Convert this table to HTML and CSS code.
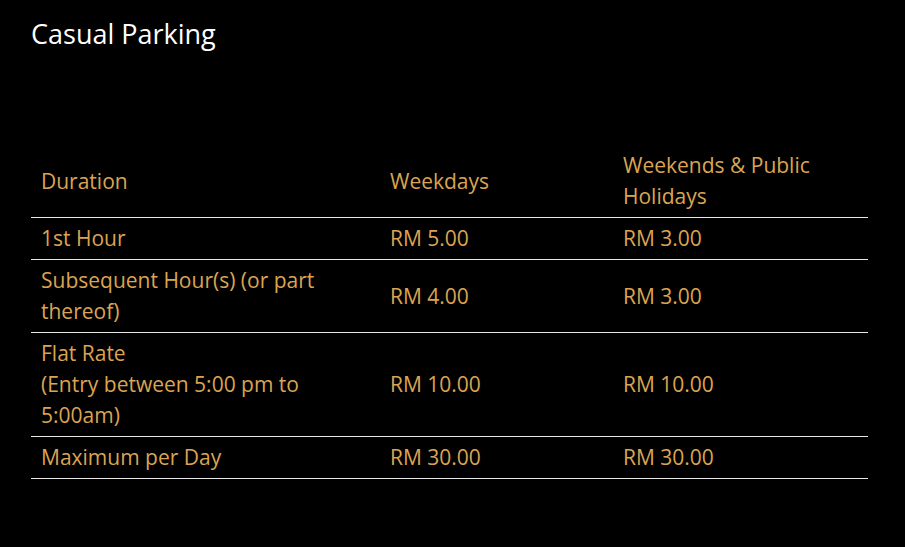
FILE: index.html
```html
<!DOCTYPE html>
<html>
<head>
<meta charset="utf-8">
<link rel="stylesheet" href="styles.css">
</head>
<body>
<div class="page">
  <h2 class="title">Casual Parking</h2>
  <table class="rates">
    <thead>
      <tr>
        <th class="c1">Duration</th>
        <th class="c2">Weekdays</th>
        <th class="c3">Weekends &amp; Public Holidays</th>
      </tr>
    </thead>
    <tbody>
      <tr><td>1st Hour</td><td>RM 5.00</td><td>RM 3.00</td></tr>
      <tr><td>Subsequent Hour(s) (or part thereof)</td><td>RM 4.00</td><td>RM 3.00</td></tr>
      <tr><td>Flat Rate<br>(Entry between 5:00 pm to 5:00am)</td><td>RM 10.00</td><td>RM 10.00</td></tr>
      <tr><td>Maximum per Day</td><td>RM 30.00</td><td>RM 30.00</td></tr>
    </tbody>
  </table>
</div>
</body>
</html>
```
FILE: styles.css
```css
html, body {
  margin: 0;
  padding: 0;
  background: #000;
}
.page {
  padding: 17px 37px 0 31px;
  font-family: "Open Sans", "Lato", sans-serif;
}
.title {
  margin: 0 0 94px 0;
  color: #fff;
  font-size: 27px;
  font-weight: 400;
  line-height: 34px;
}
.rates {
  width: 837px;
  border-collapse: collapse;
  table-layout: fixed;
  color: #dca452;
  font-size: 21px;
  line-height: 31px;
}
.rates th, .rates td {
  box-sizing: border-box;
  text-align: left;
  font-weight: 400;
  vertical-align: middle;
  padding: 5px 10px;
  border-bottom: 1px solid #e8e8e8;
}
.c1 { width: 349px; }
.c2 { width: 233px; }
.c3 { width: 255px; }
```
